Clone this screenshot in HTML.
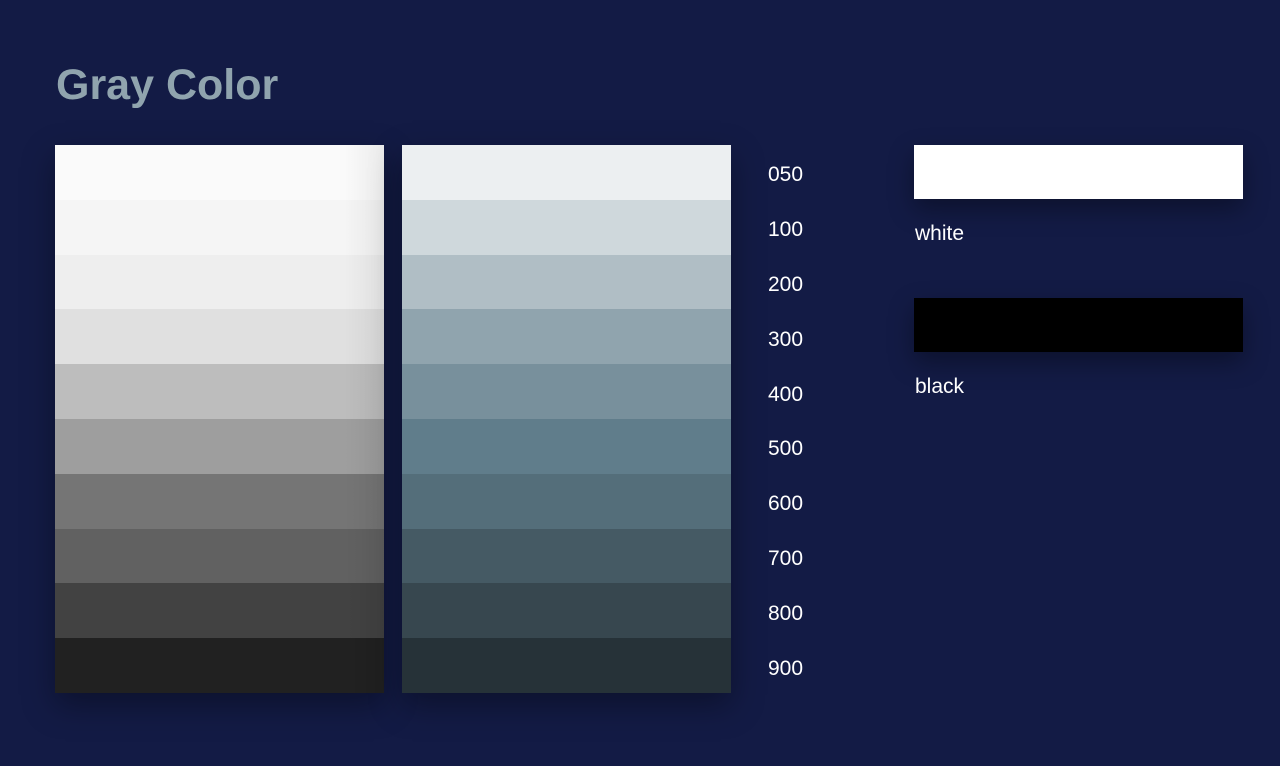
<!DOCTYPE html>
<html><head><meta charset="utf-8"><style>
body{margin:0;width:1280px;height:766px;background:#131b45;font-family:"Liberation Sans",sans-serif;position:relative;overflow:hidden}
h1{position:absolute;left:56px;top:61px;margin:0;font-size:43px;font-weight:bold;color:#90a4ae;letter-spacing:0}
.col{position:absolute;top:145px;width:329px;box-shadow:0 12px 30px rgba(0,0,0,0.35)}
.col div{height:54.8px}
#g{left:55px}
#g::after{content:"";position:absolute;right:0;top:0;bottom:0;width:40px;background:linear-gradient(to right,rgba(0,0,0,0),rgba(0,0,0,0.06))}
#b{left:402px}
.lab{position:absolute;left:768px;color:#fff;font-size:21px}
.sw{position:absolute;left:914px;width:329px;height:54px;box-shadow:0 10px 25px rgba(0,0,0,0.35)}
.t{position:absolute;left:915px;color:#fff;font-size:21px}
</style></head><body>
<h1>Gray Color</h1>
<div class="col" id="g">
<div style="background:#fafafa"></div><div style="background:#f5f5f5"></div><div style="background:#eeeeee"></div><div style="background:#e0e0e0"></div><div style="background:#bdbdbd"></div><div style="background:#9e9e9e"></div><div style="background:#757575"></div><div style="background:#616161"></div><div style="background:#424242"></div><div style="background:#212121"></div>
</div>
<div class="col" id="b">
<div style="background:#eceff1"></div><div style="background:#cfd8dc"></div><div style="background:#b0bec5"></div><div style="background:#90a4ae"></div><div style="background:#78909c"></div><div style="background:#607d8b"></div><div style="background:#546e7a"></div><div style="background:#455a64"></div><div style="background:#37474f"></div><div style="background:#263238"></div>
</div>
<div class="lab" style="top:163px">050</div>
<div class="lab" style="top:218px">100</div>
<div class="lab" style="top:273px">200</div>
<div class="lab" style="top:328px">300</div>
<div class="lab" style="top:383px">400</div>
<div class="lab" style="top:437px">500</div>
<div class="lab" style="top:492px">600</div>
<div class="lab" style="top:547px">700</div>
<div class="lab" style="top:602px">800</div>
<div class="lab" style="top:657px">900</div>
<div class="sw" style="top:145px;background:#fff"></div>
<div class="t" style="top:222px">white</div>
<div class="sw" style="top:298px;background:#000"></div>
<div class="t" style="top:375px">black</div>
</body></html>
